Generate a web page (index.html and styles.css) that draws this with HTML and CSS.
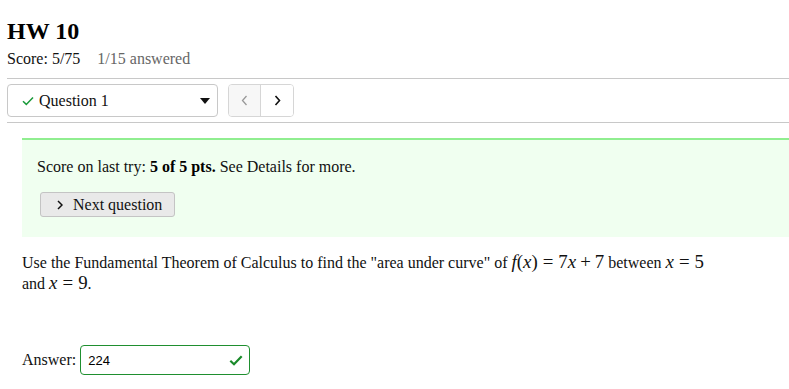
FILE: index.html
```html
<!DOCTYPE html>
<html>
<head>
<meta charset="utf-8">
<link rel="stylesheet" href="styles.css">
</head>
<body>
<div class="page">
  <h1 class="title">HW 10</h1>
  <div class="scoreline"><span class="score">Score: 5/75</span><span class="answered">1/15 answered</span></div>
  <div class="navbar">
    <div class="qselect">
      <svg class="qcheck" width="12" height="10" viewBox="0 0 12 10"><path d="M1 5.2 L4.3 8.4 L11 1.4" fill="none" stroke="#1a9a3a" stroke-width="1.5"/></svg>
      <span class="qlabel">Question 1</span>
      <svg class="caret" width="10" height="6" viewBox="0 0 10 6"><path d="M0 0 H10 L5 6 Z" fill="#111"/></svg>
    </div>
    <div class="pager">
      <button class="pbtn prev"><svg width="7" height="11" viewBox="0 0 7 11"><path d="M5.5 1 L1.5 5.5 L5.5 10" fill="none" stroke="#999" stroke-width="1.3"/></svg></button>
      <button class="pbtn next"><svg width="7" height="11" viewBox="0 0 7 11"><path d="M1.5 1 L5.5 5.5 L1.5 10" fill="none" stroke="#111" stroke-width="1.6"/></svg></button>
    </div>
  </div>
  <div class="main">
    <div class="feedback">
      <p class="fbtext">Score on last try: <b>5 of 5 pts.</b> See Details for more.</p>
      <button class="nextq"><svg width="6" height="10" viewBox="0 0 6 10"><path d="M1 1 L5 5 L1 9" fill="none" stroke="#111" stroke-width="1.5"/></svg><span>Next question</span></button>
    </div>
    <p class="question">Use the Fundamental Theorem of Calculus to find the "area under curve" of <span class="m"><i>f</i>(<i>x</i>)<span class="rel">=</span>7<i>x</i><span class="bin">+</span>7</span> between <span class="m"><i>x</i><span class="rel">=</span>5</span><br>and <span class="m"><i>x</i><span class="rel">=</span>9</span>.</p>
    <div class="answer">
      <span class="alabel">Answer:</span>
      <div class="ainput"><span class="aval">224</span><svg width="14" height="11" viewBox="0 0 14 11"><path d="M1.3 5.8 L5 9.3 L12.7 1.3" fill="none" stroke="#1a8a2a" stroke-width="2.2"/></svg></div>
    </div>
  </div>
</div>
</body>
</html>
```
FILE: styles.css
```css
html, body {
  margin: 0;
  padding: 0;
  background: #fff;
}
body {
  font-family: "Liberation Serif", "Times New Roman", serif;
  font-size: 16px;
  color: #111;
}
.page {
  padding-left: 7px;
  padding-top: 17px;
}
.title {
  font-size: 24px;
  font-weight: bold;
  margin: 0;
  line-height: 28px;
  color: #000;
}
.scoreline {
  margin-top: 4px;
  line-height: 20px;
  padding-bottom: 9px;
  border-bottom: 1px solid #c8c8c8;
}
.score { color: #111; }
.answered { color: #666; margin-left: 17px; }
.navbar {
  display: flex;
  align-items: center;
  gap: 10px;
  padding: 5px 0 5px;
  border-bottom: 1px solid #c8c8c8;
}
.qselect {
  width: 209px;
  height: 31px;
  border: 1px solid #c8c8c8;
  border-radius: 4px;
  display: flex;
  align-items: center;
  box-sizing: content-box;
}
.qcheck { margin-left: 14px; margin-right: 5px; }
.qlabel { flex: 1; }
.caret { margin-right: 7px; }
.pager {
  display: flex;
  border: 1px solid #d6d6d6;
  border-radius: 4px;
  overflow: hidden;
  height: 31px;
}
.pbtn {
  width: 32px;
  height: 31px;
  border: 0;
  padding: 0;
  margin: 0;
  display: flex;
  align-items: center;
  justify-content: center;
  background: #fff;
}
.pbtn.prev { background: #f7f7f7; border-right: 1px solid #d6d6d6; }
.main {
  padding-left: 15px;
  padding-top: 15px;
}
.feedback {
  background: #f0fff0;
  border-top: 2px solid #90ee90;
  padding: 17px 15px 20px;
}
.fbtext {
  margin: 0;
  line-height: 20px;
}
.fbtext b { color: #000; }
.nextq {
  margin-top: 15px;
  margin-left: 3px;
  display: flex;
  align-items: center;
  gap: 10px;
  width: 135px;
  height: 25px;
  padding: 0 0 0 16px;
  background: #e9e9e9;
  border: 1px solid #c4c4c4;
  border-radius: 3px;
  font-family: "Liberation Serif", "Times New Roman", serif;
  font-size: 16px;
  color: #111;
}
.question {
  margin: 15px 0 0;
  line-height: 21px;
  padding-right: 70px;
}
.m {
  font-size: 1.18em;
  line-height: 16px;
}
.m i { font-style: italic; }
.rel { margin: 0 5px; }
.bin { margin: 0 4px; }
.answer {
  margin-top: 51px;
  display: flex;
  align-items: center;
  gap: 4px;
}
.ainput {
  width: 170px;
  height: 30px;
  border: 1px solid #1f8f2f;
  border-radius: 4px;
  display: flex;
  align-items: center;
  justify-content: space-between;
  padding: 0 6px 0 7px;
  box-sizing: border-box;
  font-family: "Liberation Sans", Arial, sans-serif;
  font-size: 13px;
  color: #000;
}
```
